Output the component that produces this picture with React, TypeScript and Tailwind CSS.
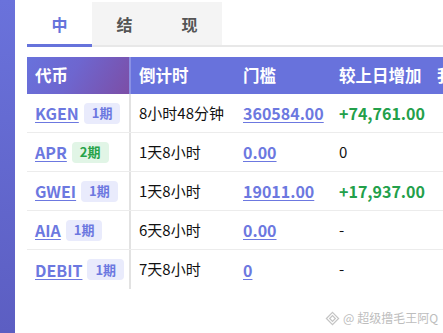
import React from "react";

type Row = {
  token: string;
  phase: string;
  green?: boolean;
  countdown: string;
  threshold: string;
  change: string;
  up?: boolean;
};

const rows: Row[] = [
  { token: "KGEN", phase: "1期", countdown: "8小时48分钟", threshold: "360584.00", change: "+74,761.00", up: true },
  { token: "APR", phase: "2期", green: true, countdown: "1天8小时", threshold: "0.00", change: "0" },
  { token: "GWEI", phase: "1期", countdown: "1天8小时", threshold: "19011.00", change: "+17,937.00", up: true },
  { token: "AIA", phase: "1期", countdown: "6天8小时", threshold: "0.00", change: "-" },
  { token: "DEBIT", phase: "1期", countdown: "7天8小时", threshold: "0", change: "-" },
];

export default function App() {
  return (
    <div
      className="relative flex w-[443px] h-[333px] overflow-hidden bg-white"
      style={{ fontFamily: '"Noto Sans CJK SC", "Noto Sans", sans-serif' }}
    >
      <div className="w-[15px] shrink-0 bg-[linear-gradient(180deg,#6a72db,#5c5ec2)]" />
      <div className="flex-1 pl-3 pt-[2px] min-w-0">
        {/* tabs */}
        <div className="flex border-b-2 border-[#e8e8e8] h-[45px]">
          <div className="relative w-[65px] flex items-center justify-center text-[16px] font-bold text-[#6673db]">
            中
            <div className="absolute left-0 right-0 -bottom-[2px] h-[3px] bg-[#6673db]" />
          </div>
          <div className="w-[65px] flex items-center justify-center text-[16px] font-bold text-[#555] bg-[#f4f4f4]">
            结
          </div>
          <div className="w-[65px] flex items-center justify-center text-[16px] font-bold text-[#555] bg-[#f4f4f4]">
            现
          </div>
        </div>

        {/* table */}
        <div className="mt-[10px] w-[520px] text-[15px]">
          <div className="flex h-[37px] bg-[#6872dc] text-white font-bold text-[16.5px]">
            <div className="w-[104px] pl-2 flex items-center bg-[linear-gradient(120deg,#6872dc_0%,#6e66cf_45%,#7c4ea6_100%)] border-r-2 border-[#8a90e4]">
              代币
            </div>
            <div className="w-[104px] pl-2 flex items-center">倒计时</div>
            <div className="w-[96px] pl-2 flex items-center">门槛</div>
            <div className="w-[98px] pl-2 flex items-center">较上日增加</div>
            <div className="w-[98px] pl-2 flex items-center">我</div>
          </div>
          {rows.map((r) => (
            <div key={r.token} className="flex h-[39px] border-b border-[#ececec] last:border-b-0">
              <div className="w-[104px] pl-2 flex items-center gap-[5px] border-r-2 border-[#e2e2e2]">
                <a className="font-bold text-[16px] text-[#6c78e0] underline underline-offset-2">{r.token}</a>
                <span
                  className={
                    r.green
                      ? "px-2 h-[21px] flex items-center rounded text-[13px] font-bold bg-[#e1f5e6] text-[#27a349]"
                      : "px-2 h-[21px] flex items-center rounded text-[13px] font-bold bg-[#e9ebfc] text-[#6c78e0]"
                  }
                >
                  {r.phase}
                </span>
              </div>
              <div className="w-[104px] pl-2 flex items-center text-[#111]">{r.countdown}</div>
              <div className="w-[96px] pl-2 flex items-center">
                <a className="font-bold text-[16px] text-[#6c78e0] underline underline-offset-2">{r.threshold}</a>
              </div>
              <div
                className={
                  r.up
                    ? "w-[98px] pl-2 flex items-center font-bold text-[16px] text-[#23a04a]"
                    : "w-[98px] pl-2 flex items-center text-[#111]"
                }
              >
                {r.change}
              </div>
              <div className="w-[98px]" />
            </div>
          ))}
        </div>
      </div>

      {/* watermark */}
      <div className="absolute left-[325px] top-[309px] flex items-center gap-[3px] text-[12px] text-[#bdbdbd] whitespace-nowrap">
        <svg width="15" height="15" viewBox="0 0 16 16" fill="none" stroke="#c4c4c4" strokeWidth="1.3">
          <path d="M8 1.5 L14.5 8 L8 14.5 L1.5 8 Z" />
          <path d="M5 8 L8 5 L11 8 L8 11 Z" />
        </svg>
        <span className="text-[12px]">@</span>
        <span>超级撸毛王阿Q</span>
      </div>
    </div>
  );
}
